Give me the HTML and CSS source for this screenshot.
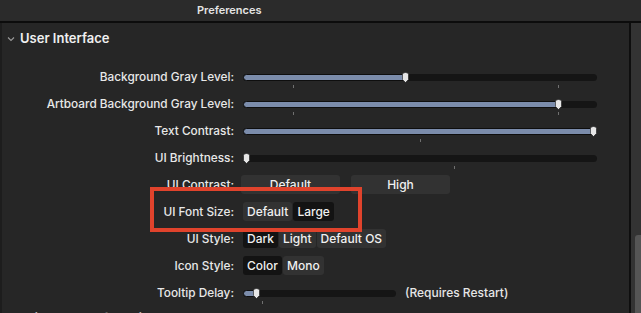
FILE: index.html
```html
<!DOCTYPE html>
<html>
  <head>
    <title>Preferences</title>
    <link rel="stylesheet" href="styles.css">
  </head>
  <body>
    <div class="window">
      <div class="titlebar">Preferences</div>
      <div class="body">
        <div class="panel">
          <div class="section-head">
            <svg class="chevron" width="8" height="6" viewBox="0 0 8 6"><path d="M1 1.5 L4 4.5 L7 1.5" fill="none" stroke="#9a9a9a" stroke-width="1.1"/></svg>
            <span>User Interface</span>
          </div>

          <div class="row">
            <label>Background Gray Level:</label>
            <div class="slider">
              <div class="track"><div class="fill" style="width: 164px"></div></div>
              <span class="tick" style="left: 50px"></span>
              <span class="tick" style="left: 315px"></span>
              <svg class="thumb" style="left: 159px" width="7" height="11" viewBox="0 0 7 11"><path d="M0.5 2.5 Q0.5 0.5 3.5 0.5 Q6.5 0.5 6.5 2.5 V7.5 L3.5 10.5 L0.5 7.5 Z" fill="#e6e6e6" stroke="#1a1a1a" stroke-width="0.6"/></svg>
            </div>
          </div>

          <div class="row">
            <label>Artboard Background Gray Level:</label>
            <div class="slider">
              <div class="track"><div class="fill" style="width: 317px"></div></div>
              <span class="tick" style="left: 50px"></span>
              <span class="tick" style="left: 315px"></span>
              <svg class="thumb" style="left: 312px" width="7" height="11" viewBox="0 0 7 11"><path d="M0.5 2.5 Q0.5 0.5 3.5 0.5 Q6.5 0.5 6.5 2.5 V7.5 L3.5 10.5 L0.5 7.5 Z" fill="#e6e6e6" stroke="#1a1a1a" stroke-width="0.6"/></svg>
            </div>
          </div>

          <div class="row">
            <label>Text Contrast:</label>
            <div class="slider">
              <div class="track"><div class="fill" style="width: 354px"></div></div>
              <span class="tick" style="left: 177px"></span>
              <svg class="thumb" style="left: 347px" width="7" height="11" viewBox="0 0 7 11"><path d="M0.5 2.5 Q0.5 0.5 3.5 0.5 Q6.5 0.5 6.5 2.5 V7.5 L3.5 10.5 L0.5 7.5 Z" fill="#e6e6e6" stroke="#1a1a1a" stroke-width="0.6"/></svg>
            </div>
          </div>

          <div class="row">
            <label>UI Brightness:</label>
            <div class="slider">
              <div class="track"><div class="fill" style="width: 0px"></div></div>
              <span class="tick" style="left: 211px"></span>
              <svg class="thumb" style="left: 0px" width="7" height="11" viewBox="0 0 7 11"><path d="M0.5 2.5 Q0.5 0.5 3.5 0.5 Q6.5 0.5 6.5 2.5 V7.5 L3.5 10.5 L0.5 7.5 Z" fill="#e6e6e6" stroke="#1a1a1a" stroke-width="0.6"/></svg>
            </div>
          </div>

          <div class="row">
            <label>UI Contrast:</label>
            <div class="segments wide">
              <button class="seg">Default</button>
              <button class="seg">High</button>
            </div>
          </div>

          <div class="row">
            <div class="highlight"></div>
            <label>UI Font Size:</label>
            <div class="segments inset">
              <button class="seg">Default</button>
              <button class="seg on">Large</button>
            </div>
          </div>

          <div class="row">
            <label>UI Style:</label>
            <div class="segments">
              <button class="seg on">Dark</button>
              <button class="seg">Light</button>
              <button class="seg">Default OS</button>
            </div>
          </div>

          <div class="row">
            <label>Icon Style:</label>
            <div class="segments">
              <button class="seg on">Color</button>
              <button class="seg">Mono</button>
            </div>
          </div>

          <div class="row">
            <label>Tooltip Delay:</label>
            <div class="slider short">
              <div class="track"><div class="fill" style="width: 14px"></div></div>
              <span class="tick" style="left: 19px"></span>
              <svg class="thumb" style="left: 10px" width="7" height="11" viewBox="0 0 7 11"><path d="M0.5 2.5 Q0.5 0.5 3.5 0.5 Q6.5 0.5 6.5 2.5 V7.5 L3.5 10.5 L0.5 7.5 Z" fill="#e6e6e6" stroke="#1a1a1a" stroke-width="0.6"/></svg>
            </div>
            <span class="note">(Requires Restart)</span>
          </div>

          <div class="subhead">Decimal Places for Unit Types:</div>
        </div>
        <div class="scrollbar"><div class="scroll-thumb"></div></div>
      </div>
    </div>
  </body>
</html>
```

FILE: styles.css
```css
* {
  box-sizing: border-box;
}

body {
  margin: 0;
  padding: 0;
  background-color: #262626;
  font-family: Inter, "Noto Sans", sans-serif;
  color: #e8e8e8;
  overflow: hidden;
}

.window {
  width: 641px;
  height: 313px;
  display: flex;
  flex-direction: column;
}

.titlebar {
  height: 23px;
  flex-shrink: 0;
  background-color: #2b2b2b;
  border-bottom: 2px solid #0c0c0c;
  padding-left: 197px;
  padding-top: 3px;
  font-size: 11px;
  font-weight: 600;
  color: #e4e4e4;
}

.body {
  flex: 1;
  display: flex;
  min-height: 0;
}

.panel {
  flex: 1;
  background-color: #262626;
  border-left: 2px solid #1d1d1d;
  border-right: 2px solid #0e0e0e;
  overflow: hidden;
}

.section-head {
  height: 30px;
  display: flex;
  align-items: center;
  gap: 5px;
  padding-left: 5px;
  font-size: 13px;
  font-weight: 600;
  color: #f0f0f0;
}

.chevron {
  margin-top: 1px;
}

.section-head + .row {
  margin-top: 10px;
}

.row {
  position: relative;
  height: 27px;
  display: flex;
  align-items: center;
}

.row label {
  width: 232px;
  flex-shrink: 0;
  text-align: right;
  font-size: 11.8px;
  font-weight: 500;
  color: #e8e8e8;
}

.slider {
  position: relative;
  width: 354px;
  height: 12px;
  margin-left: 9px;
}

.slider.short {
  width: 153px;
}

.track {
  position: absolute;
  left: 0;
  right: 0;
  top: 3px;
  height: 7px;
  background-color: #151515;
  border-radius: 4px;
}

.fill {
  height: 7px;
  background-color: #7b8cab;
  border: 1px solid #0e0e0e;
  border-radius: 4px;
}

.tick {
  position: absolute;
  top: 14px;
  width: 1px;
  height: 3px;
  background-color: #707070;
}

.thumb {
  position: absolute;
  top: 1px;
}

.segments {
  display: flex;
  gap: 1px;
  margin-left: 9px;
}

.segments.wide {
  gap: 11px;
  margin-left: 7px;
}

.seg {
  height: 19px;
  padding: 0 4px;
  border: none;
  border-radius: 3px;
  background-color: #323232;
  color: #f0f0f0;
  font-family: Inter, "Noto Sans", sans-serif;
  font-size: 12px;
  font-weight: 500;
}

.seg.on {
  background-color: #131313;
}

.segments.wide .seg {
  width: 99px;
}

.highlight {
  position: absolute;
  z-index: 2;
  left: 148px;
  top: -11px;
  width: 212px;
  height: 45px;
  border: 4px solid #e0432c;
  pointer-events: none;
}

.note {
  margin-left: 9px;
  font-size: 12px;
  font-weight: 500;
  color: #e6e6e6;
}

.subhead {
  margin-top: 4px;
  padding-left: 10px;
  font-size: 12px;
  font-weight: 600;
  color: #e6e6e6;
}

.scrollbar {
  width: 10px;
  background-color: #333333;
  position: relative;
}

.scroll-thumb {
  position: absolute;
  top: 212px;
  left: 4px;
  right: 0;
  bottom: 0;
  background-color: #555555;
  border-radius: 3px 0 0 0;
}
```
